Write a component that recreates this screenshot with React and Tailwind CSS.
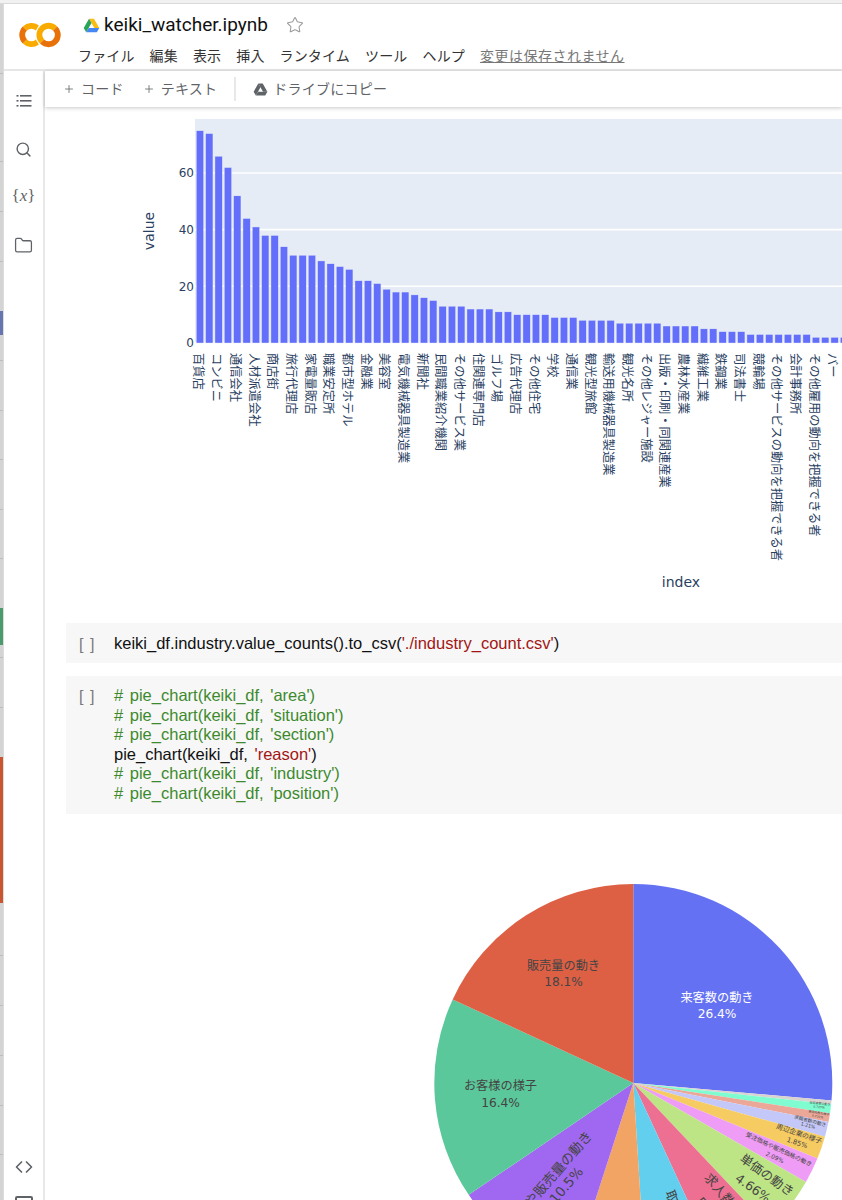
import React from "react";
import { Star, Search, Folder, ChevronLeft, ChevronRight, Plus } from "lucide-react";

const FONT = '"DejaVu Sans", "Noto Sans CJK JP", sans-serif';
const AXIS = "#2a3f5f";

const VALUES = [75,74,66,62,52,44,41,38,38,34,31,31,31,29,28,27,26,22,22,21,19,18,18,17,16,15,13,13,13,12,12,12,11,11,10,10,10,10,9,9,9,8,8,8,8,7,7,7,7,7,6,6,6,6,5,5,4,4,4,3,3,3,3,3,3,3,2,2,2,2];
const LABELS = ["百貨店","コンビニ","通信会社","人材派遣会社","商店街","旅行代理店","家電量販店","職業安定所","都市型ホテル","金融業","美容室","電気機械器具製造業","新聞社","民間職業紹介機関","その他サービス業","住関連専門店","ゴルフ場","広告代理店","その他住宅","学校","通信業","観光型旅館","輸送用機械器具製造業","観光名所","その他レジャー施設","出版・印刷・同関連産業","農林水産業","繊維工業","鉄鋼業","司法書士","競輪場","その他サービスの動向を把握できる者","会計事務所","その他雇用の動向を把握できる者","バー"];

const SLICES = [
  ["#6571f3", 0, 26.4],
  ["#d9d4d0", 26.4, 26.7],
  ["#7ffcd0", 26.7, 27.42],
  ["#eba898", 27.42, 28.14],
  ["#c4c8f8", 28.14, 29.35],
  ["#f6cb62", 29.35, 31.2],
  ["#ee9cf5", 31.2, 33.29],
  ["#bde585", 33.29, 37.95],
  ["#ed6f91", 37.95, 43.1],
  ["#62cfef", 43.1, 49],
  ["#f2a464", 49, 55],
  ["#a068f0", 55, 65.5],
  ["#5bc89b", 65.5, 81.9],
  ["#dd6045", 81.9, 100],
];

const PIE_TEXT = [
  ["来客数の動き", 717, 998, 0, 12.2, "#ffffff"],
  ["26.4%", 717, 1014, 0, 12.2, "#ffffff"],
  ["販売量の動き", 563.5, 966, 0, 12.2, "#444444"],
  ["18.1%", 563.5, 982, 0, 12.2, "#444444"],
  ["お客様の様子", 500.5, 1086, 0, 12.2, "#444444"],
  ["16.4%", 500.5, 1103, 0, 12.2, "#444444"],
  ["受注量や販売量の動き", 545, 1184, -49, 13.5, "#444444"],
  ["10.5%", 566, 1185, -49, 13.5, "#444444"],
  ["取引先の様子", 684, 1227, 68, 13, "#444444"],
  ["求人数の動き", 732, 1205, 50, 13, "#444444"],
  ["5.15%", 712, 1215, 50, 13, "#444444"],
  ["単価の動き", 767, 1175, 35.5, 12.5, "#444444"],
  ["4.66%", 753, 1188, 35.5, 12.5, "#444444"],
  ["受注価格や販売価格の動き", 779, 1149, 25, 6, "#444444"],
  ["2.09%", 775, 1157, 25, 6, "#444444"],
  ["周辺企業の様子", 799, 1134, 19, 6.8, "#444444"],
  ["1.85%", 797, 1143, 19, 6.8, "#444444"],
  ["求職者数の動き", 810, 1121, 14.5, 4.7, "#444444"],
  ["1.21%", 808, 1125.5, 14.5, 4.7, "#444444"],
  ["雇用形態の様子", 819, 1113, 9, 3, "#444444"],
  ["0.720%", 817.5, 1116.5, 9, 3, "#444444"],
  ["採用者数の動き", 820, 1103.5, 6, 3, "#444444"],
  ["0.723%", 819, 1107, 6, 3, "#444444"],
];

const STRIP = [
  [70, "#d4d4d4", true], [88, "#d4d4d4", true], [50, "#d4d4d4", true], [50, "#d4d4d4", true],
  [49, "#d4d4d4", false], [24, "#6674b0", false], [26, "#d4d4d4", true], [50, "#d4d4d4", true],
  [49, "#d4d4d4", true], [50, "#d4d4d4", true], [49, "#d4d4d4", true], [49, "#d4d4d4", false],
  [37, "#4b9a6c", false], [13, "#d4d4d4", true], [50, "#d4d4d4", true], [49, "#d4d4d4", false],
  [146, "#c9562f", false], [53, "#d4d4d4", true], [50, "#d4d4d4", true], [50, "#d4d4d4", true],
  [50, "#d4d4d4", true], [49, "#d4d4d4", true], [45, "#d4d4d4", false],
];

function slicePath(from, to) {
  const cx = 633.3, cy = 1083, r = 199;
  const pt = (p) => {
    const a = (p / 100) * Math.PI * 2;
    return `${cx + r * Math.sin(a)} ${cy - r * Math.cos(a)}`;
  };
  return `M${cx} ${cy} L${pt(from)} A${r} ${r} 0 ${to - from > 50 ? 1 : 0} 1 ${pt(to)} Z`;
}

function DriveIcon({ mono }) {
  return (
    <svg viewBox="0 0 24 24" className={mono ? "w-[15px] h-[15px]" : "w-[17px] h-[17px]"}>
      <path d="M8.5 2.5h7L23 15.5h-7z" fill={mono ? "#5f6368" : "#f9bc15"} />
      <path d="M8.5 2.5L1 15.5l3.5 6L12 8.5z" fill={mono ? "#5f6368" : "#2aa457"} />
      <path d="M8 15.5l-3.5 6h15l3.5-6z" fill={mono ? "#5f6368" : "#4688f1"} />
    </svg>
  );
}

function ColabLogo() {
  return (
    <svg viewBox="0 0 24 24" className="w-[42px] h-[42px]">
      <path fill="#E8710A" d="M4.54,9.46,2.19,7.1a6.93,6.93,0,0,0,0,9.79l2.36-2.36A3.59,3.59,0,0,1,4.54,9.46Z" />
      <path fill="#F9AB00" d="M2.19,7.1,4.54,9.46a3.59,3.59,0,0,1,5.08,0l1.71-2.93h0l-.1-.08h0A6.93,6.93,0,0,0,2.19,7.1Z" />
      <path fill="#F9AB00" d="M11.34,17.46h0L9.62,14.54a3.59,3.59,0,0,1-5.08,0L2.19,16.9a6.93,6.93,0,0,0,9,.65l.11-.09" />
      <path fill="#F9AB00" d="M12,7.1a6.93,6.93,0,0,0,0,9.79l2.36-2.36a3.59,3.59,0,1,1,5.08-5.08L21.81,7.1A6.93,6.93,0,0,0,12,7.1Z" />
      <path fill="#E8710A" d="M21.81,7.1,19.46,9.46a3.59,3.59,0,0,1-5.08,5.08L12,16.9A6.93,6.93,0,0,0,21.81,7.1Z" />
    </svg>
  );
}

function LeftStrip() {
  return (
    <div className="w-[4px] shrink-0 flex flex-col overflow-hidden border-r border-[#dcdcdc]">
      {STRIP.map(([h, c, line], i) => (
        <div key={i} className={line ? "shrink-0 border-b border-[#bdbdbd]" : "shrink-0"} style={{ height: h, background: c }} />
      ))}
    </div>
  );
}

function Sidebar() {
  const cell = "h-[48px] shrink-0 flex items-center justify-center text-[#5f6368]";
  return (
    <div className="w-[41px] shrink-0 border-r-2 border-[#e8e8e8] pt-[6px] flex flex-col">
      <div className={cell}>
        <svg viewBox="0 0 18 18" className="w-[18px] h-[18px]" fill="currentColor">
          <rect x="1.5" y="3" width="2" height="1.6" /><rect x="5" y="3" width="11.5" height="1.6" />
          <rect x="1.5" y="8" width="2" height="1.6" /><rect x="5" y="8" width="11.5" height="1.6" />
          <rect x="1.5" y="13" width="2" height="1.6" /><rect x="5" y="13" width="11.5" height="1.6" />
        </svg>
      </div>
      <div className={cell}><Search size={17} strokeWidth={2} /></div>
      <div className={cell}>
        <span className="text-[17px] leading-none -mt-[4px]" style={{ fontFamily: '"Liberation Serif", serif' }}>{"{"}<span className="italic">x</span>{"}"}</span>
      </div>
      <div className={cell}><Folder size={19} strokeWidth={1.6} /></div>
      <div className="h-[874px] shrink-0" />
      <div className={cell}>
        <ChevronLeft size={20} strokeWidth={2} className="-mr-[5px]" />
        <ChevronRight size={20} strokeWidth={2} className="-ml-[5px]" />
      </div>
      <div className="h-[48px] shrink-0 flex justify-center pt-[5px]">
        <div className="w-[18px] h-[22px] shrink-0 border-2 border-[#5f6368] rounded-[2px]" />
      </div>
    </div>
  );
}

function BarChart() {
  return (
    <svg width="797" height="515" viewBox="45 108 797 515" className="block shrink-0 mt-[1px]" style={{ fontFamily: FONT }}>
      <rect x="195" y="119" width="647" height="224" fill="#e5ecf6" />
      {[173, 229.6, 286.3, 343].map((y) => (
        <line key={y} x1="195" x2="842" y1={y} y2={y} stroke="#ffffff" strokeWidth="1.6" />
      ))}
      {VALUES.map((v, i) => (
        <rect key={i} x={196.3 + i * 9.333} y={343 - v * 2.83} width="7.3" height={v * 2.83} fill="#636efa" stroke="#e5ecf6" strokeWidth="0.4" />
      ))}
      {[["60", 173], ["40", 230], ["20", 286.5], ["0", 343]].map(([t, y]) => (
        <text key={t} x="194" y={y} dominantBaseline="central" textAnchor="end" fontSize="12" fill={AXIS}>{t}</text>
      ))}
      <text transform="translate(149 231) rotate(-90)" textAnchor="middle" dominantBaseline="central" fontSize="14" fill={AXIS}>value</text>
      <text x="681" y="582" textAnchor="middle" dominantBaseline="central" fontSize="14" fill={AXIS}>index</text>
      {LABELS.map((l, i) => (
        <text key={l} transform={`translate(${197.7 + i * 18.67} 353) rotate(90)`} dominantBaseline="central" fontSize="12.25" fill={AXIS}>{l}</text>
      ))}
    </svg>
  );
}

function PieChart() {
  return (
    <svg width="797" height="386" viewBox="45 814 797 386" className="block shrink-0" style={{ fontFamily: FONT }}>
      {SLICES.map(([c, a, b]) => (
        <path key={c} d={slicePath(a, b)} fill={c} />
      ))}
      {PIE_TEXT.map(([t, x, y, r, s, c]) => (
        <text key={t} transform={`translate(${x} ${y}) rotate(${r})`} textAnchor="middle" dominantBaseline="central" fontSize={s} fill={c}>{t}</text>
      ))}
    </svg>
  );
}

function CodeLine({ children }) {
  return <div className="h-[19.6px] leading-[19.6px] whitespace-pre [word-spacing:2px]">{children}</div>;
}

function Comment({ arg }) {
  return (
    <CodeLine>
      <span className="text-[#3d8a2e]">{`# pie_chart(keiki_df, '${arg}')`}</span>
    </CodeLine>
  );
}

function Bracket() {
  return <div className="w-[48px] shrink-0 pl-[13px] mt-[1px] text-[#7a7a7a] text-[16px] leading-[19.6px] tracking-[1px] whitespace-pre">{"[ ]"}</div>;
}

export default function App() {
  const menu = ["ファイル", "編集", "表示", "挿入", "ランタイム", "ツール", "ヘルプ"];
  return (
    <div className="w-[842px] h-[1200px] overflow-hidden bg-white flex flex-col" style={{ fontFamily: 'Roboto, "Noto Sans CJK JP", sans-serif' }}>
      <div className="h-[4px] shrink-0 bg-[#f1f1f1] border-b border-[#d9d9d9]" />
      <div className="flex flex-1 min-h-0">
        <LeftStrip />
        <div className="flex-1 min-w-0 flex flex-col">
          <header className="h-[67px] shrink-0 border-b-2 border-[#e6e6e6] flex">
            <div className="pl-[15px] pt-[10px] w-[79px] shrink-0"><ColabLogo /></div>
            <div className="flex flex-col">
              <div className="h-[36px] flex items-center pt-[7px] gap-[4px]">
                <DriveIcon />
                <span className="text-[19px] text-[#111]">keiki_watcher.ipynb</span>
                <Star size={18} strokeWidth={1.4} className="text-[#9a9a9a] ml-[14px] -mt-[2px]" />
              </div>
              <nav className="flex items-center gap-[15px] text-[14px] text-[#333] tracking-[0.15px] -ml-[5px] mt-[6px]">
                {menu.map((m) => <span key={m}>{m}</span>)}
                <span className="text-[#777] underline tracking-[0.5px]">変更は保存されません</span>
              </nav>
            </div>
          </header>
          <div className="flex flex-1 min-h-0">
            <Sidebar />
            <div className="flex-1 min-w-0 flex flex-col">
              <div className="h-[36px] shrink-0 flex items-center bg-white shadow-[0_1px_4px_rgba(0,0,0,0.22)] text-[#5f6368] text-[14px] tracking-[0.25px] pl-[18px] relative">
                <Plus size={12} strokeWidth={1.6} />
                <span className="ml-[6px]">コード</span>
                <Plus size={12} strokeWidth={1.6} className="ml-[19px]" />
                <span className="ml-[6px]">テキスト</span>
                <div className="w-[2px] h-[24px] bg-[#e8e8e8] ml-[17px]" />
                <div className="ml-[17px]"><DriveIcon mono /></div>
                <span className="ml-[5px]">ドライブにコピー</span>
              </div>
              <BarChart />
              <div className="ml-[21px] h-[40px] shrink-0 bg-[#f7f7f7] flex items-start pt-[11px] text-[16.5px] text-[#111]" style={{ fontFamily: '"Liberation Sans", sans-serif' }}>
                <Bracket />
                <CodeLine>keiki_df.industry.value_counts().to_csv(<span className="text-[#a31515]">'./industry_count.csv'</span>)</CodeLine>
              </div>
              <div className="ml-[21px] mt-[13px] h-[138px] shrink-0 bg-[#f7f7f7] flex items-start pt-[10px] text-[16.5px] text-[#111]" style={{ fontFamily: '"Liberation Sans", sans-serif' }}>
                <Bracket />
                <div>
                  <Comment arg="area" />
                  <Comment arg="situation" />
                  <Comment arg="section" />
                  <CodeLine>pie_chart(keiki_df, <span className="text-[#a31515]">'reason'</span>)</CodeLine>
                  <Comment arg="industry" />
                  <Comment arg="position" />
                </div>
              </div>
              <PieChart />
            </div>
          </div>
        </div>
      </div>
    </div>
  );
}
